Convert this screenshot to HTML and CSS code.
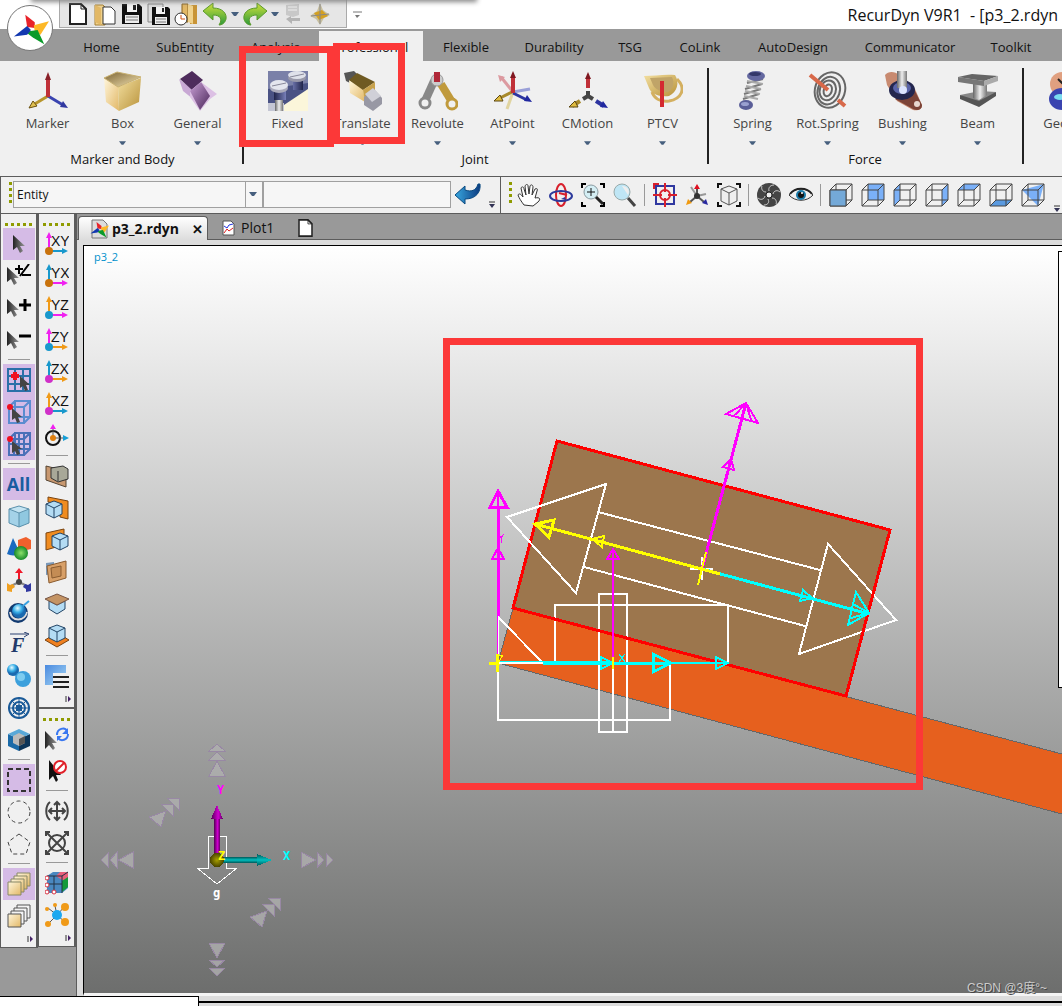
FILE: index.html
```html
<!DOCTYPE html>
<html lang="en">
<head>
  <meta charset="UTF-8" />
  <title>RecurDyn V9R1 - [p3_2.rdyn]</title>
  <meta name="viewport" content="width=device-width, initial-scale=1.0" />
  <link rel="stylesheet" href="styles.css">
</head>
<body>

  <!-- shared icon parts -->
  <svg class="defs" aria-hidden="true">
    <defs>
      <linearGradient id="gCursor" x1="0" x2="1"><stop offset="0" stop-color="#222"/><stop offset="1" stop-color="#999"/></linearGradient>
      <linearGradient id="gGold" x1="0" x2="1" y1="0" y2="1"><stop offset="0" stop-color="#f3dfa0"/><stop offset="1" stop-color="#b8923a"/></linearGradient>
      <linearGradient id="gLid" x1="0" x2="1" y1="0" y2="1"><stop offset="0" stop-color="#7c6434"/><stop offset="1" stop-color="#f4e4b4"/></linearGradient>
      <linearGradient id="gPurple" x1="0" x2="1" y1="0" y2="1"><stop offset="0" stop-color="#c9a0d6"/><stop offset="1" stop-color="#4a2658"/></linearGradient>
      <linearGradient id="gSteel" x1="0" x2="1"><stop offset="0" stop-color="#666"/><stop offset=".5" stop-color="#eee"/><stop offset="1" stop-color="#777"/></linearGradient>
      <linearGradient id="gBlue" x1="0" x2="1" y1="0" y2="1"><stop offset="0" stop-color="#4a8ae0"/><stop offset="1" stop-color="#a8d8f4"/></linearGradient>
      <linearGradient id="gSwoosh" x1="0" x2="1"><stop offset="0" stop-color="#38a8e0"/><stop offset="1" stop-color="#0c3a80"/></linearGradient>
      <linearGradient id="gGreen" x1="0" x2="0" y1="0" y2="1"><stop offset="0" stop-color="#d2e23a"/><stop offset="1" stop-color="#2c9a3c"/></linearGradient>
      <linearGradient id="gNavy" x1="0" x2="1"><stop offset="0" stop-color="#20244a"/><stop offset=".5" stop-color="#8a92d0"/><stop offset="1" stop-color="#20244a"/></linearGradient>
      <linearGradient id="gTan" x1="0" x2="1" y1="0" y2="1"><stop offset="0" stop-color="#fff6dc"/><stop offset="1" stop-color="#e2b866"/></linearGradient>
      <linearGradient id="gMag" x1="0" x2="1"><stop offset="0" stop-color="#500050"/><stop offset=".6" stop-color="#d000d0"/><stop offset="1" stop-color="#600060"/></linearGradient>
      <linearGradient id="gCyan" x1="0" x2="0" y1="0" y2="1"><stop offset="0" stop-color="#005858"/><stop offset=".5" stop-color="#00c0c0"/><stop offset="1" stop-color="#005858"/></linearGradient>
      <radialGradient id="gOlive"><stop offset="0" stop-color="#a8a000"/><stop offset="1" stop-color="#4a4600"/></radialGradient>
      <radialGradient id="gBall" cx=".4" cy=".3"><stop offset="0" stop-color="#e8fbff"/><stop offset=".6" stop-color="#38b0e8"/><stop offset="1" stop-color="#1a6ab0"/></radialGradient>
      <radialGradient id="gGrn"><stop offset="0" stop-color="#8ae06a"/><stop offset="1" stop-color="#168a2a"/></radialGradient>
    </defs>
    <symbol id="cursor" viewBox="0 0 24 24"><path d="M6 3v15l4-3 3 6 3-2-3-5h5z" fill="url(#gCursor)"/></symbol>
    <symbol id="cursor-left" viewBox="0 0 24 24"><path d="M0 3v15l4-3 3 6 3-2-3-5h5z" fill="url(#gCursor)"/></symbol>
    <symbol id="ax-up" viewBox="0 0 24 24"><path d="M3 19V6H1l3-6 3 6H5v13z" fill="currentColor"/></symbol>
    <symbol id="ax-right" viewBox="0 0 24 24"><path d="M5 18h12v-2l6 3-6 3v-2H5z" fill="currentColor"/></symbol>
    <symbol id="ax-dot" viewBox="0 0 24 24"><circle cx="4" cy="19" r="4" fill="currentColor"/></symbol>
    <symbol id="frame" viewBox="0 0 24 24"><path d="M1 7h16v16H1zM7 1h16v16H7zM1 7l6-6M17 7l6-6M17 23l6-6M1 23l6-6" fill="none" stroke="#444"/></symbol>
    <symbol id="cube" viewBox="0 0 24 24"><path d="M2 5l10 4v14L2 19z" fill="#a4d2e8"/><path d="M12 9l10-4v14l-10 4z" fill="#90c8e0"/><path d="M2 5l10-3 10 3-10 4z" fill="#c4e4f2"/><path d="M2 5l10 4 10-4M12 9v14M2 5l10-3 10 3v14l-10 4-10-4z" fill="none" stroke="#5a90ac"/></symbol>
    <symbol id="more" viewBox="0 0 8 8"><path d="M1 1h6" stroke="#333"/><path d="M1 3h6L4 7z" fill="#335"/></symbol>
    <symbol id="more-side" viewBox="0 0 8 8"><path d="M2 1v6" stroke="#333"/><path d="M4 1v6l3-3z" fill="#426"/></symbol>
    <symbol id="drop" viewBox="0 0 8 4"><path d="M0 0h8L5 4H3z" fill="#465f7e"/></symbol>
    <symbol id="page" viewBox="0 0 18 22"><path d="M1 1h11l5 5v15H1z" fill="#fff" stroke="#222" stroke-width="2"/><path d="M12 1v5h5" fill="none" stroke="#222"/></symbol>
    <symbol id="star" viewBox="0 0 40 40"><path d="M17 19L15 6l10 8 0 6z" fill="#e8232a"/><path d="M24 17l16-4-9 14-6-3z" fill="#fdb827"/><path d="M15 24l13-2 7 15-12-7z" fill="#0b9a2a"/><path d="M3 29l14-11 4 4-4 5z" fill="#1238b0"/></symbol>
    <symbol id="spike" viewBox="0 0 24 24"><path d="M12 13V5M12 13l-7 6M12 13l7 6" stroke-width="2" stroke="#555"/><path d="M9 6l3-5 3 5z" fill="#e01020"/><path d="M1 22l2-6 4 4z" fill="#f09a10"/><path d="M23 22l-2-6-4 4z" fill="#2a2aa0"/><circle cx="12" cy="13" r="3" fill="#333"/></symbol>
  </svg>

  <header class="titlebar">
    <button class="app-btn" aria-label="Application menu"><svg width="38" height="38"><use href="#star"/></svg></button>
    <div class="quick">
      <button aria-label="New"><svg width="18" height="22"><use href="#page"/></svg></button>
      <button aria-label="Open"><svg width="22" height="24" viewBox="0 0 22 24"><path d="M1 3h8l2 2v18H1z" fill="#f0d28c" stroke="#a88030"/><path d="M9 5h8l4 4v13H9z" fill="#fff" stroke="#333"/><path d="M1 3l6 3v17l-6-3z" fill="#e2b866"/></svg></button>
      <button aria-label="Save"><svg width="22" height="22" viewBox="0 0 22 22"><path d="M1 1h17l3 3v17H1z" fill="#111"/><path d="M6 1h10v8H6z" fill="#f4f4f4"/><path d="M12 2h3v5h-3z" fill="#222"/><path d="M4 12h14v8H4z" fill="#eee"/><path d="M5 14h12M5 17h12" stroke="#777"/></svg></button>
      <button aria-label="Save all"><svg width="24" height="24" viewBox="0 0 24 24"><path d="M1 2h15v18H1z" fill="#ddd" stroke="#888"/><path d="M5 5h16l2 2v16H5z" fill="#111"/><path d="M9 5h9v7H9z" fill="#f4f4f4"/><path d="M15 6h2v4h-2z" fill="#222"/><path d="M8 15h12v7H8z" fill="#eee"/><path d="M9 17h10M9 20h10" stroke="#777"/></svg></button>
      <button aria-label="History"><svg width="24" height="24" viewBox="0 0 24 24"><path d="M8 2h6v18H8z" fill="#e2b866" stroke="#8a6420"/><path d="M16 3h7v19h-7z" fill="#c89436"/><path d="M14 2l5 2v18l-5-2z" fill="#f0d28c"/><circle cx="7" cy="17" r="6" fill="#fff" stroke="#333"/><path d="M7 13v4h4" fill="none" stroke="#d05010"/></svg></button>
      <button class="wide" aria-label="Undo"><svg width="24" height="24" viewBox="0 0 24 24"><path d="M0 9L10 1v5c10 0 14 6 13 11-1 4-4 6-7 6 4-6 1-10-6-10v5z" fill="url(#gGreen)" stroke="#5a9a2a"/></svg></button>
      <button class="narrow" aria-label="Undo list"><svg width="8" height="4"><use href="#drop"/></svg></button>
      <button class="wide" aria-label="Redo"><svg width="24" height="24" viewBox="0 0 24 24"><path d="M24 9L14 1v5C4 6 0 12 1 17c1 4 4 6 7 6-4-6-1-10 6-10v5z" fill="url(#gGreen)" stroke="#5a9a2a"/></svg></button>
      <button class="narrow" aria-label="Redo list"><svg width="8" height="4"><use href="#drop"/></svg></button>
      <button aria-label="Update"><svg width="18" height="24" viewBox="0 0 18 24"><path d="M2 3l13-1v11l-6 2-7-2z" fill="#c8c8c8"/><path d="M4 5h9M4 8h9" stroke="#eee"/><path d="M2 17l5-3v2h9v3H8v3z" fill="#b4b4b4"/></svg></button>
      <button aria-label="Settings"><svg width="22" height="24" viewBox="0 0 22 24"><path d="M11 1l3 7 7 5-6 3-4 7-4-6-6-3 7-5z" fill="#c8c0a0"/><path d="M5 11l8-3 6 6-9 4z" fill="#d4a020"/><path d="M11 2v20M2 14l18-2" stroke="#888"/></svg></button>
    </div>
    <button class="customize" aria-label="Customize"><svg width="9" height="7" viewBox="0 0 9 7"><path d="M0 1h9" stroke="#777"/><path d="M2 4h5L4 7z" fill="#777"/></svg></button>
    <h1>RecurDyn V9R1&nbsp; - [p3_2.rdyn</h1>
  </header>

  <nav class="tabs">
    <a href="#">Home</a><a href="#">SubEntity</a><a href="#">Analysis</a><a href="#" class="active">Professional</a><a href="#">Flexible</a><a href="#">Durability</a><a href="#">TSG</a><a href="#">CoLink</a><a href="#">AutoDesign</a><a href="#">Communicator</a><a href="#">Toolkit</a>
  </nav>

  <div class="ribbon">
    <section class="group">
      <div class="items">
        <button class="cmd"><svg class="pic" viewBox="0 0 40 40"><path d="M20 25L5 34" stroke="#b8962c" stroke-width="3"/><path d="M1 37l4-7 4 5z" fill="#e0c050" stroke="#6a5010"/><path d="M20 25l15 9" stroke="#3a44b0" stroke-width="3"/><path d="M40 37l-8-1 3-6z" fill="#3038a0"/><path d="M20 26V7" stroke="#c03038" stroke-width="4"/><path d="M17 9l3-8 3 8z" fill="#8a2028"/></svg><span>Marker</span></button>
        <button class="cmd"><svg class="pic" viewBox="0 0 40 40"><path d="M1 7l14 9 1 24L3 31z" fill="url(#gTan)"/><path d="M15 16l23-9-2 24-20 9z" fill="url(#gGold)"/><path d="M1 7l13-6 24 5-23 10z" fill="url(#gLid)" stroke="#c8b070"/></svg><span>Box</span><svg class="caret"><use href="#drop"/></svg></button>
        <button class="cmd"><svg class="pic" viewBox="0 0 40 40"><path d="M1 8l4 12 10 8-1-10z" fill="#c8a8d4"/><path d="M2 8L14 0l11 9-11 10z" fill="#4e2c5c"/><path d="M12 20l11-9 16 12-7 5-10 12-10-14z" fill="#dcc0e4"/><path d="M12 20l11-9 9 14-10 14z" fill="url(#gPurple)"/></svg><span>General</span><svg class="caret"><use href="#drop"/></svg></button>
      </div>
      <h2>Marker and Body</h2>
    </section>
    <section class="group">
      <div class="items">
        <button class="cmd"><svg class="pic" viewBox="0 0 40 40"><path d="M0 0h40v40H0z" fill="#7a80a8"/><path d="M0 18l40-6v14L16 40H0z" fill="#4a5284"/><path d="M0 32h16v8H0z" fill="#c4c6d4"/><path d="M16 40v-6l24-16v22z" fill="#fbf6da"/><path d="M6 16h12v13H6zM25 6h10v13H25z" fill="url(#gNavy)"/><path d="M7 29h8v11H7z" fill="url(#gSteel)"/><ellipse cx="11" cy="17" rx="9" ry="5" fill="#aab"/><ellipse cx="11" cy="14" rx="9" ry="5" fill="#e4e6ee"/><ellipse cx="29" cy="7" rx="9" ry="4" fill="#99a"/><ellipse cx="29" cy="4" rx="9" ry="4" fill="#dfe1ea"/><path d="M4 15l14-3M22 6l14-3" stroke="#889"/></svg><span>Fixed</span></button>
        <button class="cmd"><svg class="pic" viewBox="0 0 40 40"><path d="M1 2l10-2 6 6-6 8-8-4z" fill="#555"/><path d="M6 9l14 8 2 14L7 22z" fill="url(#gTan)"/><path d="M6 9L14 2l18 9-12 8z" fill="#6f5a22"/><path d="M20 19l12-8v11l-10 9z" fill="#c8a24c"/><path d="M21 26l10-8 8 9v6l-9 7-9-6z" fill="#9898a4"/><path d="M22 23l8-6 8 8-9 6z" fill="#d0d0d8"/></svg><span>Translate</span><svg class="caret"><use href="#drop"/></svg></button>
        <button class="cmd"><svg class="pic" viewBox="0 0 40 40"><path d="M16 10L7 30" stroke="#888" stroke-width="8"/><path d="M23 13l11 18" stroke="#c09a3c" stroke-width="8"/><circle cx="7" cy="32" r="5" fill="#f0f0f0" stroke="#888" stroke-width="3"/><circle cx="34" cy="33" r="5" fill="#f0f0f0" stroke="#c09a3c" stroke-width="3"/><circle cx="19" cy="9" r="6" fill="#ccc" stroke="#999"/><path d="M16 1h6v10h-6z" fill="#b02838"/></svg><span>Revolute</span><svg class="caret"><use href="#drop"/></svg></button>
        <button class="cmd"><svg class="pic" viewBox="0 0 40 40"><path d="M20 21L8 6" stroke="#dc9aa0" stroke-width="3"/><path d="M5 4l7 2-5 5z" fill="#dc9aa0"/><path d="M20 21l17-3" stroke="#9aa0d8" stroke-width="3"/><path d="M20 21l-6 17" stroke="#e0d4a0" stroke-width="3"/><path d="M19 21L5 28" stroke="#a88a2c" stroke-width="3"/><path d="M1 30l6-6 3 6z" fill="#e0bc40" stroke="#5a4610"/><path d="M20 22l14 7" stroke="#2c34a0" stroke-width="3"/><path d="M39 31l-8-1 3-6z" fill="#2028a0"/><path d="M20 22V6" stroke="#c03038" stroke-width="4"/><path d="M17 7l3-7 3 7z" fill="#801820"/></svg><span>AtPoint</span><svg class="caret"><use href="#drop"/></svg></button>
        <button class="cmd"><svg class="pic" viewBox="0 0 40 40"><path d="M20 25l-5 3M20 25l5 3M20 25v-5" stroke="#444" stroke-width="4"/><path d="M12 30l-8 5" stroke="#a88a2c" stroke-width="4"/><path d="M1 36l6-6 3 6z" fill="#e0bc40" stroke="#5a4610"/><path d="M28 30l8 5" stroke="#2c34a0" stroke-width="4"/><path d="M40 37l-8-1 3-6z" fill="#2028a0"/><path d="M20 17V7" stroke="#c03038" stroke-width="4"/><path d="M17 8l3-7 3 7z" fill="#801820"/></svg><span>CMotion</span><svg class="caret"><use href="#drop"/></svg></button>
        <button class="cmd"><svg class="pic" viewBox="0 0 40 40"><path d="M1 5c10 0 20-2 31-1 5 8 2 17-6 21-10 1-18-2-20-8z" fill="url(#gGold)"/><path d="M7 7c8 0 14-1 22-1 3 6 1 12-4 15-8 0-13-3-15-7z" fill="#c0a468"/><path d="M34 8c10 10 4 20-8 22-9 1-15-3-17-9" fill="none" stroke="#d4b060" stroke-width="3"/><path d="M19 10v26" stroke="#d42a30" stroke-width="4"/></svg><span>PTCV</span><svg class="caret"><use href="#drop"/></svg></button>
      </div>
      <h2>Joint</h2>
    </section>
    <section class="group">
      <div class="items">
        <button class="cmd"><svg class="pic" viewBox="0 0 40 40"><path d="M14 12l16-4M12 18l17-5M11 23l17-5M10 28l16-5" stroke="#777" stroke-width="2"/><path d="M14 10l16 3M13 15l15 3M12 20l15 3M11 25l14 3" stroke="#aaa" stroke-width="2"/><ellipse cx="23" cy="5" rx="9" ry="5" fill="#6468a0"/><ellipse cx="22" cy="3" rx="6" ry="2" fill="#34386a"/><ellipse cx="13" cy="34" rx="7" ry="5" fill="#5a5e98"/><ellipse cx="12" cy="33" rx="4" ry="2" fill="#9aa0d0"/></svg><span>Spring</span><svg class="caret"><use href="#drop"/></svg></button>
        <button class="cmd"><svg class="pic" viewBox="0 0 40 40"><g fill="none" stroke="#666" stroke-width="2" transform="rotate(18 22 19)"><ellipse cx="22" cy="19" rx="15" ry="18"/><ellipse cx="21" cy="20" rx="11" ry="14"/><ellipse cx="20" cy="20" rx="8" ry="10"/><ellipse cx="20" cy="20" rx="4" ry="6"/></g><path d="M2 4l18 15M30 29l7 6" stroke="#d8694a" stroke-width="4"/></svg><span>Rot.Spring</span><svg class="caret"><use href="#drop"/></svg></button>
        <button class="cmd"><svg class="pic" viewBox="0 0 40 40"><path d="M2 4c3-4 10-4 14 0l16 14 7 16c0 5-5 6-9 5L14 30 4 14z" fill="#c88a70"/><path d="M12 28l20-8 7 14c0 5-5 6-9 4z" fill="#7c4438"/><circle cx="34" cy="33" r="3" fill="#e8d8d0"/><ellipse cx="19" cy="19" rx="13" ry="10" fill="#23264e"/><ellipse cx="19" cy="17" rx="9" ry="6" fill="#5a64a8"/><path d="M14 0h10v17H14z" fill="url(#gSteel)"/><circle cx="20" cy="19" r="4" fill="#dce4ff"/></svg><span>Bushing</span><svg class="caret"><use href="#drop"/></svg></button>
        <button class="cmd"><svg class="pic" viewBox="0 0 40 40"><path d="M2 24l20-4 16 1-17 14z" fill="#888"/><path d="M2 24l19 6v6L2 28zM21 30l17-9v4L21 36z" fill="#555"/><path d="M15 10h14v14l-8 5-6-2z" fill="url(#gSteel)"/><path d="M0 6l26 4v5L0 11z" fill="#777"/><path d="M0 6l14-3 26 2-14 5z" fill="#666"/><path d="M26 10l14-5v5l-14 5z" fill="#aaa"/></svg><span>Beam</span><svg class="caret"><use href="#drop"/></svg></button>
      </div>
      <h2>Force</h2>
    </section>
    <section class="group">
      <div class="items">
        <button class="cmd"><svg class="pic" viewBox="0 0 40 40"><circle cx="14" cy="13" r="12" fill="#e0a080"/><path d="M10 8l8 8" stroke="#222" stroke-width="2"/><ellipse cx="14" cy="28" rx="13" ry="11" fill="#3a44b0"/><ellipse cx="12" cy="26" rx="6" ry="3" fill="#7adcf0"/></svg><span>Geo Sur</span></button>
      </div>
    </section>
  </div>

  <div class="toolbar">
    <form class="entity">
      <span class="grip"></span>
      <label class="combo">
        <select aria-label="Selection type"><option>Entity</option></select>
        <svg><use href="#drop"/></svg>
      </label>
      <input type="text" aria-label="Entity name">
      <button type="button" class="enter" aria-label="Apply"><svg width="26" height="22" viewBox="0 0 26 22"><path d="M0 12l10-9v4c6 2 11 1 13-6h2c1 8-4 15-15 15v5z" fill="url(#gSwoosh)" stroke="#0a4a80"/></svg></button>
      <svg class="more"><use href="#more"/></svg>
    </form>
    <div class="views">
      <span class="grip"></span>
      <button aria-label="Pan"><svg viewBox="0 0 24 24"><path d="M7 22C4 18 2 15 1 12c1-2 3-1 5 2L4 5c1-2 3-1 3 1l2 6-1-9c1-2 3-2 3 0l1 8 1-8c1-2 3-1 3 1l-1 8 3-6c2-1 3 0 2 2l-2 7c5-1 6 1 3 4l-5 4z" fill="#fff" stroke="#333"/></svg></button>
      <button aria-label="Rotate"><svg viewBox="0 0 24 24" fill="none" stroke-width="2"><ellipse cx="12" cy="12" rx="5" ry="11" stroke="#d8202c"/><ellipse cx="12" cy="13" rx="11" ry="5" stroke="#2c3a9c"/><path d="M10 10l8 2" stroke="#d8202c"/><path d="M12 16l4-2 1 3z" fill="#2c3a9c"/></svg></button>
      <button aria-label="Zoom area"><svg viewBox="0 0 24 24"><path d="M1 5V1h4M19 1h4v4M1 19v4h4M23 19v4h-4" fill="none" stroke="#000" stroke-width="2"/><circle cx="10" cy="9" r="7" fill="#d4eef4" stroke="#8a9aa0"/><path d="M10 5v8M6 9h8" stroke="#111"/><path d="M15 14l7 7" stroke="#222" stroke-width="3"/></svg></button>
      <button aria-label="Zoom"><svg viewBox="0 0 24 24"><circle cx="9" cy="9" r="8" fill="#bfe6f5" stroke="#9aa"/><path d="M9 3a6 6 0 0 1 6 9z" fill="#eee"/><path d="M15 15l7 8" stroke="#444" stroke-width="3"/></svg></button>
      <i></i>
      <button aria-label="Fit"><svg viewBox="0 0 24 24" fill="none"><path d="M3 3h18v18H3z" stroke="#3038a0" stroke-width="2"/><path d="M1 6V1h5" stroke="#d8202c" stroke-width="2"/><circle cx="12" cy="12" r="5" stroke="#d8202c" stroke-width="2"/><path d="M12 0v9M12 15v9M0 12h9M15 12h9" stroke="#d8202c" stroke-width="2"/></svg></button>
      <button aria-label="Axes"><svg viewBox="0 0 24 24"><path d="M12 13L6 4M12 13l9-2" stroke="#999" stroke-width="2"/><use href="#spike"/></svg></button>
      <button aria-label="Fit all"><svg viewBox="0 0 24 24" fill="none"><path d="M1 5V1h4M19 1h4v4M1 19v4h4M23 19v4h-4" stroke="#111" stroke-width="2"/><path d="M4 6l8-3 8 3v12l-8 4-8-4zM4 6l8 4 8-4M12 10v12" fill="#eee" stroke="#555"/></svg></button>
      <i></i>
      <button aria-label="Capture"><svg viewBox="0 0 24 24"><circle cx="12" cy="12" r="12" fill="#444"/><path d="M12 8c-1-4 2-6 5-6M16 11c1-4 5-4 7-2M15 15c4 0 5 4 4 6M11 16c2 4-1 6-4 6M8 13c-1 4-5 4-7 2M9 9C5 9 4 5 5 3" fill="none" stroke="#ccc"/><circle cx="12" cy="12" r="3" fill="#eee" stroke="#222"/></svg></button>
      <button aria-label="Look at"><svg viewBox="0 0 24 24"><path d="M0 12C6 4 18 4 24 12 18 19 6 19 0 12z" fill="#f0f0f0" stroke="#333"/><path d="M1 11C6 4 18 4 23 11" fill="none" stroke="#222" stroke-width="2"/><circle cx="12" cy="12" r="5" fill="#1a7aa8"/><circle cx="12" cy="12" r="3" fill="#111"/><circle cx="13" cy="10" r="1" fill="#fff"/></svg></button>
      <i></i>
      <button aria-label="Front"><svg viewBox="0 0 24 24"><use href="#frame"/><path d="M1 7h16v16H1z" fill="#74a9d8" stroke="#444"/></svg></button>
      <button aria-label="Back"><svg viewBox="0 0 24 24"><path d="M7 1h16v16H7z" fill="#7ab0f8"/><use href="#frame"/></svg></button>
      <button aria-label="Left"><svg viewBox="0 0 24 24"><path d="M1 7l6-6v16l-6 6z" fill="#7ab0f8"/><use href="#frame"/></svg></button>
      <button aria-label="Right"><svg viewBox="0 0 24 24"><path d="M17 7l6-6v16l-6 6z" fill="#7ab0f8"/><use href="#frame"/></svg></button>
      <button aria-label="Top"><svg viewBox="0 0 24 24"><path d="M1 7l6-6h16l-6 6z" fill="#7ab0f8"/><use href="#frame"/></svg></button>
      <button aria-label="Bottom"><svg viewBox="0 0 24 24"><path d="M1 23l6-6h16l-6 6z" fill="#5a9ae0"/><use href="#frame"/></svg></button>
      <button aria-label="Isometric"><svg viewBox="0 0 24 24"><path d="M1 7l22-6-6 22z" fill="#7ab0f8"/><use href="#frame"/></svg></button>
      <svg class="more"><use href="#more"/></svg>
    </div>
  </div>

  <div class="main">
    <aside class="side">
      <span class="grip flat"></span>
      <button class="on" aria-label="Select"><svg viewBox="0 0 24 24"><use href="#cursor"/></svg></button>
      <button aria-label="Toggle select"><svg viewBox="0 0 24 24"><use href="#cursor-left"/><path d="M12 1v9M8 5h8M22 0l-9 12M15 11h9" stroke="#000" stroke-width="2"/></svg></button>
      <button aria-label="Add select"><svg viewBox="0 0 24 24"><use href="#cursor-left"/><path d="M18 3v12M12 9h12" stroke="#000" stroke-width="3"/></svg></button>
      <button aria-label="Remove select"><svg viewBox="0 0 24 24"><use href="#cursor-left"/><path d="M12 8h12" stroke="#000" stroke-width="3"/></svg></button>
      <hr>
      <button class="on" aria-label="Snap grid"><svg viewBox="0 0 24 24"><path d="M1 1h22v22H1zM8 1v22M16 1v22M1 8h22M1 16h22" fill="none" stroke="#2a70a8" stroke-width="2"/><path d="M8 4v8M4 8h8" stroke="#f01020" stroke-width="4"/><path d="M13 8v12l3-2 2 5 3-1-2-5h4z" fill="#444"/></svg></button>
      <button class="on" aria-label="Snap vertex"><svg viewBox="0 0 24 24"><path d="M2 7h15v16H2zM8 1h15v16H8zM2 7l6-6M17 7l6-6M17 23l6-6" fill="none" stroke="#5a8cd0" stroke-width="2"/><circle cx="3" cy="7" r="3" fill="#f01020"/><path d="M5 8v12l3-2 2 5 3-1-2-5h4z" fill="#444"/></svg></button>
      <button class="on" aria-label="Snap mesh"><svg viewBox="0 0 24 24"><path d="M2 7h15v16H2zM8 1h15v16H8zM2 7l6-6M17 7l6-6M17 23l6-6M7 7v16M12 1v22M2 12h21M17 1v22" fill="none" stroke="#4a70b8" stroke-width="2"/><circle cx="3" cy="7" r="3" fill="#f01020"/><path d="M5 9v12l3-2 2 4 3-1-2-5h4z" fill="#444"/></svg></button>
      <hr>
      <button class="on" aria-label="All"><b>All</b></button>
      <button aria-label="Body"><svg viewBox="0 0 24 24"><use href="#cube"/></svg></button>
      <button aria-label="Geometry"><svg viewBox="0 0 24 24"><path d="M11 4l8-3 5 3v9l-9 2-4-3z" fill="#f0602c"/><path d="M0 18L6 2l7 15c-3 3-9 3-13 1z" fill="#1a6ac0"/><circle cx="14" cy="17" r="7" fill="url(#gGrn)"/></svg></button>
      <button aria-label="Marker"><svg viewBox="0 0 24 24"><path d="M12 14V6M12 14l-8 4M12 14l8 4" stroke="#888" stroke-width="2"/><path d="M11 11V5H8l4-5 4 5h-3v6z" fill="#f01828"/><path d="M0 15l3 2 3-1 2 3-3 2v3l-5-1z" fill="#f0a020"/><path d="M24 15l-3 2-3-1-2 3 3 2v3l5-1z" fill="#3038a0"/><circle cx="12" cy="14" r="3" fill="#444"/></svg></button>
      <button aria-label="Joint"><svg viewBox="0 0 24 24"><circle cx="11" cy="13" r="10" fill="#123a70"/><path d="M3 12c2 10 14 10 17 0" fill="none" stroke="#ddd" stroke-width="2"/><circle cx="12" cy="11" r="7" fill="url(#gBall)"/><path d="M16 6l6-5" stroke="#38a0e0" stroke-width="2"/></svg></button>
      <button aria-label="Force"><svg viewBox="0 0 24 24"><text class="force" x="4" y="20">F</text><path d="M3 2h17M17 0l5 2-5 3" fill="none" stroke="#2a4070"/></svg></button>
      <button aria-label="Contact"><svg viewBox="0 0 24 24"><path d="M6 6l9 9" stroke="#58b0e0" stroke-width="6"/><circle cx="6" cy="6" r="6" fill="url(#gBall)"/><circle cx="16" cy="15" r="8" fill="#3ca0dc"/><circle cx="14" cy="13" r="4" fill="#7cccf0"/></svg></button>
      <button aria-label="Sensor"><svg viewBox="0 0 24 24" fill="none" stroke="#1a5a98"><circle cx="12" cy="12" r="10" stroke-width="2"/><circle cx="12" cy="12" r="6" stroke-width="2"/><path d="M12 1v22M1 12h22M4 4l16 16M20 4L4 20"/><circle cx="12" cy="12" r="3" fill="#1a5a98"/></svg></button>
      <button aria-label="Subsystem"><svg viewBox="0 0 24 24"><path d="M1 6l11 5v12L1 18z" fill="#1a6aa8"/><path d="M12 11l11-5v12l-11 5z" fill="#0c3458"/><path d="M1 6l11-5 11 5-11 5z" fill="#58a8d8"/><path d="M6 8l6-3 6 3v7l-6 3-6-3z" fill="#bbb"/><path d="M12 11l6-3v7l-6 3z" fill="#555"/></svg></button>
      <hr>
      <button class="on" aria-label="Box select"><svg viewBox="0 0 24 24"><path d="M1 1h22v22H1z" fill="none" stroke="#333" stroke-width="2" stroke-dasharray="5 3"/></svg></button>
      <button aria-label="Circle select"><svg viewBox="0 0 24 24"><circle cx="12" cy="12" r="11" fill="none" stroke="#444" stroke-dasharray="4 3"/></svg></button>
      <button aria-label="Polygon select"><svg viewBox="0 0 24 24"><path d="M12 2l11 8-4 12H5L1 10z" fill="none" stroke="#444" stroke-dasharray="4 3"/></svg></button>
      <hr>
      <button class="on" aria-label="Layers"><svg viewBox="0 0 24 24" fill="url(#gTan)" stroke="#886"><path d="M10 1h13v13H10z"/><path d="M7 4h13v13H7z"/><path d="M4 7h13v13H4z"/><path d="M1 10h13v13H1z"/></svg></button>
      <button aria-label="Top layer"><svg viewBox="0 0 24 24" fill="#f4f4f4" stroke="#555"><path d="M10 1h13v13H10z"/><path d="M7 4h13v13H7z"/><path d="M4 7h13v13H4z"/><path d="M1 10h13v13H1z" fill="url(#gTan)"/></svg></button>
      <svg class="more side-more"><use href="#more-side"/></svg>
    </aside>

    <div class="side-stack">
      <aside class="side">
        <span class="grip flat"></span>
        <button aria-label="XY plane"><svg viewBox="0 0 24 24"><use href="#ax-up" class="mg"/><use href="#ax-right" class="cy"/><use href="#ax-dot" class="or"/><text class="plane" x="6" y="14">XY</text></svg></button>
        <button aria-label="YX plane"><svg viewBox="0 0 24 24"><use href="#ax-up" class="cy"/><use href="#ax-right" class="mg"/><use href="#ax-dot" class="or"/><text class="plane" x="6" y="14">YX</text></svg></button>
        <button aria-label="YZ plane"><svg viewBox="0 0 24 24"><use href="#ax-up" class="am"/><use href="#ax-right" class="mg"/><use href="#ax-dot" class="cy"/><text class="plane" x="6" y="14">YZ</text></svg></button>
        <button aria-label="ZY plane"><svg viewBox="0 0 24 24"><use href="#ax-up" class="mg"/><use href="#ax-right" class="am"/><use href="#ax-dot" class="cy"/><text class="plane" x="6" y="14">ZY</text></svg></button>
        <button aria-label="ZX plane"><svg viewBox="0 0 24 24"><use href="#ax-up" class="cy"/><use href="#ax-right" class="am"/><use href="#ax-dot" class="pk"/><text class="plane" x="6" y="14">ZX</text></svg></button>
        <button aria-label="XZ plane"><svg viewBox="0 0 24 24"><use href="#ax-up" class="am"/><use href="#ax-right" class="cy"/><use href="#ax-dot" class="pk"/><text class="plane" x="6" y="14">XZ</text></svg></button>
        <button aria-label="Working plane"><svg viewBox="0 0 24 24"><circle cx="8" cy="14" r="7" fill="none" stroke="#111" stroke-width="2"/><path d="M8 14V5M8 14h10" stroke="#555"/><path d="M5 5l3-5 3 5z" fill="#f020f0"/><path d="M18 11l6 3-6 3z" fill="#18a0d8"/><circle cx="8" cy="14" r="3" fill="#e08010"/></svg></button>
        <hr>
        <button aria-label="Clip 1"><svg viewBox="0 0 24 24"><path d="M1 2l20 5v16L1 16z" fill="#c89870" stroke="#543"/><path d="M6 4l12-2 5 3v10l-10 3-7-4z" fill="#a8a898" stroke="#333"/><path d="M13 7v10" stroke="#333"/></svg></button>
        <button aria-label="Clip 2"><svg viewBox="0 0 24 24"><path d="M3 1l20 4v18l-8-2V8L3 6z" fill="#f08c20" stroke="#7a4410"/><path d="M1 8l8-3 8 3v10l-8 4-8-4z" fill="#b4dcf4" stroke="#246"/><path d="M1 8l8 4 8-4M9 12v10" fill="none" stroke="#246"/></svg></button>
        <button aria-label="Clip 3"><svg viewBox="0 0 24 24"><path d="M1 5l18-4v6l-8 2v10l-10 3z" fill="#f08c20" stroke="#7a4410"/><path d="M7 8l8-3 8 3v10l-8 4-8-4z" fill="#b4dcf4" stroke="#246"/><path d="M7 8l8 4 8-4M15 12v10" fill="none" stroke="#246"/></svg></button>
        <button aria-label="Clip 4"><svg viewBox="0 0 24 24"><path d="M1 3l8-1v12l-8 1z" fill="#7a98b8"/><path d="M2 6l19-5v17L4 23z" fill="#d8a068" stroke="#8a5c30"/><path d="M6 8l10-2v10l-9 2z" fill="#c48c54" stroke="#8a5c30"/></svg></button>
        <button aria-label="Clip 5"><svg viewBox="0 0 24 24"><path d="M4 9l8 4 8-4v8l-8 5-8-5z" fill="#b4dcf4" stroke="#246"/><path d="M0 7l12-5 12 5-12 6z" fill="#c49464" stroke="#754"/></svg></button>
        <button aria-label="Clip 6"><svg viewBox="0 0 24 24"><path d="M0 16l12 7 12-7-5-3H5z" fill="#f08020" stroke="#7a4410"/><path d="M4 4l8-3 8 3v10l-8 4-8-4z" fill="#b4dcf4" stroke="#246"/><path d="M4 4l8 4 8-4M12 8v10" fill="none" stroke="#246"/></svg></button>
        <hr>
        <button aria-label="Layer list"><svg viewBox="0 0 24 24"><path d="M0 1h21v8H8v12H0z" fill="url(#gBlue)"/><path d="M8 13h16M8 18h16M8 23h16" stroke="#222" stroke-width="2"/></svg></button>
        <svg class="more side-more"><use href="#more-side"/></svg>
      </aside>
      <aside class="side second">
        <span class="grip flat"></span>
        <button aria-label="Refresh select"><svg viewBox="0 0 24 24"><path d="M0 4v18l4-4 4 5 2-2-3-5h5z" fill="url(#gCursor)"/><path d="M12 8c0-7 8-8 10-4M23 7c0 6-7 8-10 4" fill="none" stroke="#3a78f0" stroke-width="2"/><path d="M23 1v6h-6zM12 14V9h5z" fill="#3a78f0"/></svg></button>
        <button aria-label="Cancel select"><svg viewBox="0 0 24 24"><path d="M4 1v20l4-4 3 6 2-2-2-5h5z" fill="#111"/><circle cx="15" cy="8" r="6" fill="#fff" stroke="#e02028" stroke-width="2"/><path d="M11 12l8-8" stroke="#e02028" stroke-width="2"/></svg></button>
        <hr>
        <button aria-label="Extents"><svg viewBox="0 0 24 24" fill="none" stroke="#444" stroke-width="2"><path d="M5 3c-5 4-5 14 0 18M19 3c5 4 5 14 0 18M12 4v16M4 12h16M9 6l3-3 3 3M9 18l3 3 3-3M7 9l-3 3 3 3M17 9l3 3-3 3"/></svg></button>
        <button aria-label="Explode"><svg viewBox="0 0 24 24" fill="none" stroke="#444" stroke-width="2"><circle cx="12" cy="12" r="8"/><path d="M2 2l20 20M22 2L2 22M1 5V1h4M19 1h4v4M1 19v4h4M23 19v4h-4"/></svg></button>
        <hr>
        <button aria-label="Mesh"><svg viewBox="0 0 24 24"><path d="M2 5l6-4h15v16l-6 5H2z" fill="#4a88c0"/><path d="M11 5l4-4h8v8h-6z" fill="#e8607a"/><path d="M17 10l6-4v10l-6 5z" fill="#149a3a"/><path d="M9 5v17M2 13h15M17 5v17M2 5h15l6-4" fill="none" stroke="#234"/><g fill="#fff" stroke="#d83040"><circle cx="2" cy="7" r="2"/><circle cx="2" cy="14" r="2"/><circle cx="2" cy="21" r="2"/><circle cx="9" cy="21" r="2"/></g></svg></button>
        <button aria-label="Network"><svg viewBox="0 0 24 24"><path d="M12 12L3 5M12 12l8-9M12 12L3 21M12 12l9 8M12 12l-2-9" stroke="#555"/><g fill="#f09a18"><circle cx="2" cy="6" r="2"/><circle cx="10" cy="2" r="2"/><circle cx="20" cy="4" r="4"/><circle cx="3" cy="21" r="3"/><circle cx="20" cy="19" r="4"/></g><circle cx="12" cy="12" r="5" fill="#1ca8f0"/></svg></button>
        <svg class="more side-more"><use href="#more-side"/></svg>
      </aside>
    </div>

    <main class="work">
      <div class="doc-tabs">
        <button class="doc active"><svg width="20" height="20" viewBox="0 0 20 20"><path d="M3 1h11l4 4v14H3z" fill="#ddd" stroke="#777"/><svg width="20" height="20" x="0" y="0"><use href="#star"/></svg></svg>p3_2.rdyn <span class="close">✕</span></button>
        <button class="doc"><svg width="13" height="16" viewBox="0 0 13 16"><path d="M1 1h8l3 3v11H1z" fill="#fff" stroke="#555"/><path d="M2 6l3 2 2-3 4-1" fill="none" stroke="#2030e0"/><path d="M2 13l3-4 2 2 4-3" fill="none" stroke="#e02020"/></svg>Plot1</button>
        <button class="doc new" aria-label="New document"><svg width="15" height="18" viewBox="0 0 18 22"><use href="#page"/></svg></button>
      </div>
      <div class="frame">
        <div class="canvas">
          <svg class="scene" viewBox="84 246 978 747" preserveAspectRatio="xMinYMin meet">
            <text class="model" x="94" y="261">p3_2</text>

            <!-- slope and block -->
            <path d="M498 663l15-55 549 146v60z" fill="#e6601e" stroke="#666"/>
            <path d="M557 441l333 89-44 166-333-88z" fill="#9c764d" stroke="#f00" stroke-width="3"/>

            <!-- translational joint symbol -->
            <g fill="none" stroke="#fff" stroke-width="2">
              <path d="M507 517l99-33-30 109zM598 512l222 58M584 567l221 59M828 544l68 76-97 34z"/>
              <path d="M555 663v-58h173v58M498 663v57h172v-57M599 594h28v138h-28zM613 663v69M498 617l45 46h-45z"/>
            </g>
            <path d="M513 608l333 88" stroke="#f00" stroke-width="3"/>
            <path d="M890 530l-44 166" stroke="#f00" stroke-width="3"/>

            <!-- ground markers -->
            <g fill="none" stroke="#f0f" stroke-width="2">
              <path d="M498 507V616" stroke-width="3"/><path d="M497 616v47" stroke-width="1"/>
              <path d="M498 491l-8 16h17z" stroke-width="3"/><path d="M498 491v16"/>
              <path d="M498 548l-6 11h12z"/>
              <path d="M613 657V548M613 549l-6 10h12z"/>
              <path d="M499 534l2 4 3-4M501 538v5" stroke-width="1"/>
            </g>
            <g fill="none" stroke="#0ff" stroke-width="2">
              <path d="M543 663h128" stroke-width="3"/><path d="M498 662h115M671 663h57"/>
              <path d="M601 657l12 6-12 6z"/>
              <path d="M653 654l18 9-18 9z" stroke-width="3"/>
              <path d="M716 657l12 6-12 6z"/>
              <path d="M619 654l6 8M625 654l-6 8" stroke-width="1"/>
            </g>
            <g fill="none" stroke="#ff0">
              <path d="M489 663h11M497 654v18" stroke-width="3"/><path d="M613 657v12" stroke-width="2"/>
              <path d="M497 655h6l-5 8"/>
            </g>
            <path d="M499 663h44" stroke="#fff" stroke-width="2"/>

            <!-- body marker -->
            <path d="M690 569h23M702 557v23" stroke="#fff" stroke-width="2"/>
            <g fill="none" stroke="#f0f" stroke-width="2">
              <path d="M702 569l44-166" stroke-width="3"/>
              <path d="M746 403l-20 11 32 9zM746 403l-11 12M746 403l5 17"/>
              <path d="M731 459l-8 8 11 3z"/>
            </g>
            <g fill="none" stroke="#0ff" stroke-width="2">
              <path d="M702 569l167 45" stroke-width="3"/>
              <path d="M869 613l-13-21-8 33zM869 613l-16-9M869 613l-18 5"/>
              <path d="M812 598l-9-8-3 11z"/>
            </g>
            <g fill="none" stroke="#ff0" stroke-width="2">
              <path d="M720 574L535 524" stroke-width="3"/>
              <path d="M535 524l19-4-5 17z" stroke-width="3"/>
              <path d="M592 539l12-3-2 11zM698 585l8-33"/>
            </g>

            <!-- view navigator -->
            <g class="nav">
              <path d="M217 744l8 7h-16zM217 752l8 8h-16zM217 761l8 15h-16z"/>
              <path d="M217 976l-8-8h16zM217 967l-8-7h16zM217 958l-8-15h16z"/>
              <path d="M101 860l7-7v14zM110 860l7-8v16zM118 860l15-8v16z"/>
              <path d="M333 860l-7-7v14zM324 860l-7-8v16zM316 860l-15-8v16z"/>
              <path d="M149 817l17-6-5 16zM161 804h12v12zM167 798h12v12z"/>
              <path d="M250 917l17-6-5 16zM262 904h12v12zM268 898h12v12z"/>
            </g>
            <path d="M208 836h18v32h11l-20 16-20-16h11z" fill="none" stroke="#fff"/>
            <path d="M214 819h6v38h-6z" fill="url(#gMag)"/><path d="M217 805l6 14h-12z" fill="url(#gMag)"/>
            <path d="M222 857h35v6h-35z" fill="url(#gCyan)"/><path d="M272 860l-15 6v-12z" fill="url(#gCyan)"/>
            <circle cx="217" cy="860" r="7" fill="url(#gOlive)"/>
            <text class="axis" x="217" y="794" fill="#f0f">Y</text>
            <text class="axis" x="283" y="860" fill="#0ff">X</text>
            <text class="axis" x="218" y="860" fill="#ff0">Z</text>
            <text class="axis" x="213" y="897" fill="#fff">g</text>
          </svg>
          <div class="dock"></div>
          <span class="mark">CSDN @3度°~</span>
        </div>
      </div>
    </main>
  </div>

  <footer class="bottom"><div class="pane"></div><div class="edge"></div></footer>

  <div class="note note-fixed"></div>
  <div class="note note-translate"></div>
  <div class="note note-scene"></div>
</body>
</html>
```

FILE: styles.css
```css
:root {
  --line: #5c5c5c;
  --panel: #f0f0f0;
  --gray: #999;
  --frame: #dcdcdc;
  --on: #d5bbe6;
  --note: #fc3838;
}
* {
  margin: 0;
  padding: 0;
  box-sizing: border-box;
}
body {
  position: relative;
  height: 100vh;
  overflow: hidden;
  display: flex;
  flex-direction: column;
  background: var(--gray);
  font-family: "Open Sans", "Noto Sans", sans-serif;
  font-size: 13px;
  color: #111;
}
button {
  border: none;
  background: none;
  font: inherit;
  color: inherit;
  display: flex;
  align-items: center;
  justify-content: center;
}
svg {
  flex: none;
}
.defs {
  position: absolute;
  width: 0;
  height: 0;
}

/* title bar */
.titlebar {
  position: relative;
  display: flex;
  height: 29px;
  flex: none;
  padding-left: 59px;
  background: #fff;
}
.titlebar::before {
  content: "";
  position: absolute;
  left: 34px;
  top: -5px;
  width: 440px;
  height: 4px;
  box-shadow: 0 0 5px 3px #888;
}
.app-btn {
  position: absolute;
  left: 7px;
  top: 5px;
  width: 46px;
  height: 46px;
  border: 1px solid #777;
  border-radius: 50%;
  background: #fff;
  z-index: 2;
}
.quick {
  display: flex;
  width: 288px;
  height: 28px;
  padding-left: 4px;
  background: #e6e6e6;
  border: 1px solid #aaa;
  border-top: none;
}
.quick button {
  width: 27px;
}
.quick .wide {
  width: 32px;
}
.quick .narrow {
  width: 8px;
}
.customize {
  width: 20px;
}
h1 {
  margin-left: auto;
  padding-right: 4px;
  font-size: 16px;
  font-weight: normal;
  line-height: 30px;
  white-space: nowrap;
}

/* ribbon */
.tabs {
  display: grid;
  grid-template-columns: 73px 94px 87px 104px 86px 90px 62px 78px 108px 126px 76px;
  height: 32px;
  flex: none;
  padding: 2px 0 0 65px;
  background: var(--gray);
}
.tabs a {
  color: #111;
  text-decoration: none;
  text-align: center;
  line-height: 32px;
  white-space: nowrap;
}
.tabs .active {
  background: var(--panel);
}
.ribbon {
  display: flex;
  height: 115px;
  flex: none;
  padding-left: 3px;
  background: var(--panel);
  overflow: hidden;
}
.group {
  position: relative;
  flex: none;
  padding: 0 8px 0 7px;
}
.group:not(:last-child)::after {
  content: "";
  position: absolute;
  right: -1px;
  top: 7px;
  width: 2px;
  height: 96px;
  background: #222;
}
.items {
  display: flex;
}
.cmd {
  width: 75px;
  height: 84px;
  padding-top: 10px;
  flex-direction: column;
  justify-content: flex-start;
  color: #444;
  line-height: 24px;
  white-space: nowrap;
}
.pic {
  width: 40px;
  height: 40px;
}
.caret {
  width: 7px;
  height: 4px;
  margin-top: 6px;
}
h2 {
  font-size: 13px;
  font-weight: normal;
  line-height: 28px;
  text-align: center;
}

/* tool bars */
.toolbar {
  display: flex;
  height: 38px;
  flex: none;
  background: var(--panel);
  border-top: 1px solid var(--line);
  border-bottom: 1px solid var(--line);
}
.entity {
  display: flex;
  width: 501px;
  padding: 4px 4px 4px 8px;
  border-left: 1px solid var(--line);
  border-right: 1px solid var(--line);
}
.grip {
  width: 3px;
  height: 22px;
  margin: 1px 1px 0 0;
  flex: none;
  background: repeating-linear-gradient(#8f9b00 0 3px, transparent 3px 6px);
}
.grip.flat {
  width: 27px;
  height: 3px;
  margin: 9px 0 2px;
  background: repeating-linear-gradient(90deg, #8f9b00 0 3px, transparent 3px 6px);
}
.combo {
  position: relative;
  width: 250px;
}
.combo select {
  width: 100%;
  height: 27px;
  padding-left: 3px;
  appearance: none;
  border: 1px solid #a0a0a0;
  border-radius: 0;
  background: linear-gradient(90deg, transparent 231px, #a0a0a0 231px 232px, transparent 232px) #f6f6f6;
  font: inherit;
  font-size: 12px;
  color: #111;
}
.combo svg {
  position: absolute;
  right: 6px;
  top: 11px;
  width: 8px;
  height: 4px;
}
.entity input {
  width: 188px;
  height: 27px;
  border: 1px solid #a0a0a0;
  background: #f6f6f6;
}
.enter {
  width: 34px;
  height: 26px;
}
.more {
  width: 8px;
  height: 8px;
  margin-left: auto;
  align-self: flex-end;
}
.views {
  display: flex;
  flex: 1;
  align-items: center;
  padding: 0 1px 0 8px;
}
.views .grip {
  align-self: flex-start;
  margin-top: 5px;
}
.views button {
  width: 32px;
  height: 32px;
}
.views svg:not(.more),
.side svg:not(.more) {
  width: 24px;
  height: 24px;
}
.views i {
  width: 1px;
  height: 22px;
  margin: 0 4px 0 3px;
  background: #999;
}

.main {
  display: flex;
  flex: 1;
  min-height: 0;
}
.side {
  display: flex;
  flex-direction: column;
  align-items: center;
  align-self: flex-start;
  width: 38px;
  padding-bottom: 3px;
  flex: none;
  background: var(--panel);
  border: 1px solid var(--line);
  border-top: none;
  box-shadow: inset -1px 0 var(--line);
  padding-right: 1px;
}
.side button {
  width: 32px;
  height: 32px;
}
.side .on {
  background: var(--on);
}
.side b {
  font-size: 18px;
  line-height: 32px;
  color: #1a5ca0;
}
.side hr {
  width: 22px;
  height: 1px;
  margin: 3px 0 4px;
  border: none;
  background: #999;
}
.side-more {
  margin: 3px 2px 1px auto;
}
.side-stack {
  width: 39px;
  border-right: 1px solid var(--line);
}
.second {
  border-top: 1px solid var(--line);
}
.plane {
  font: 14px "Liberation Sans", sans-serif;
  fill: #111;
}
.force {
  font: italic bold 20px "Liberation Serif", serif;
  fill: #223a6a;
}
.mg { color: #f020f0; }
.cy { color: #1898cc; }
.or { color: #c8720c; }
.am { color: #f09a18; }
.pk { color: #d030c8; }

/* document area */
.work {
  display: flex;
  flex-direction: column;
  flex: 1;
  min-width: 0;
}
.doc-tabs {
  display: flex;
  height: 26px;
  flex: none;
  padding: 2px 0 0 1px;
  border-bottom: 1px solid var(--line);
}
.doc {
  gap: 6px;
  padding: 0 14px;
  font-size: 14px;
}
.doc.active {
  height: 24px;
  padding: 0 4px 0 10px;
  gap: 3px;
  border: 1px solid var(--line);
  border-bottom: none;
  border-radius: 4px 4px 0 0;
  background: linear-gradient(#fff, var(--frame));
  font-weight: bold;
}
.close {
  margin-left: 10px;
  font-size: 13px;
}
.doc.new {
  padding: 0 10px;
}
.frame {
  flex: 1;
  min-height: 0;
  padding: 5px 0 0 6px;
  overflow: hidden;
  background: var(--frame);
}
.canvas {
  position: relative;
  height: 100%;
  border: 1px solid #000;
  border-right: none;
  border-bottom: 3px solid #f4f4f4;
  background: linear-gradient(#fff, #6d6e6d);
}
.scene {
  display: block;
  width: 100%;
  height: auto;
  shape-rendering: crispEdges;
}
.model {
  font-size: 11px;
  fill: #0090cc;
}
.axis {
  font: bold 12px "DejaVu Sans Mono", monospace;
}
.nav {
  fill: #b0b0b0;
  fill-opacity: 0.8;
  stroke: #9888a4;
}
.dock {
  position: absolute;
  right: 0;
  top: 5px;
  width: 4px;
  height: 437px;
  background: #fff;
  border: 1px solid #000;
  border-right: none;
}
.mark {
  position: absolute;
  right: 15px;
  bottom: -3px;
  font: 12px "Liberation Sans", "Noto Sans CJK SC", sans-serif;
  line-height: 16px;
  color: #ccc;
  text-shadow: 1px 1px #444;
}
.bottom {
  display: flex;
  height: 10px;
  flex: none;
  background: var(--frame);
}
.pane {
  width: 199px;
  background: #fff;
  border-top: 1px solid #000;
  border-right: 1px solid #000;
}
.edge {
  flex: 1;
  margin-top: 5px;
  border-top: 2px solid #000;
}

/* red highlight boxes over the window */
.note {
  position: absolute;
  border: 7px solid var(--note);
  pointer-events: none;
  z-index: 3;
}
.note-fixed {
  left: 239px;
  top: 46px;
  width: 95px;
  height: 101px;
}
.note-translate {
  left: 333px;
  top: 43px;
  width: 72px;
  height: 101px;
}
.note-scene {
  left: 443px;
  top: 338px;
  width: 480px;
  height: 452px;
}
```
